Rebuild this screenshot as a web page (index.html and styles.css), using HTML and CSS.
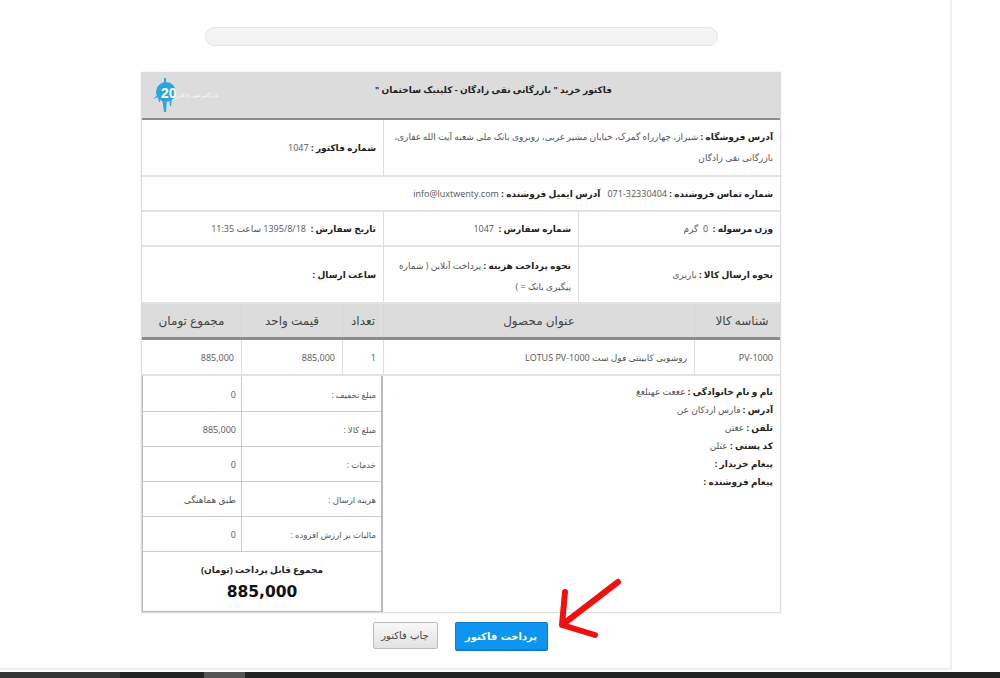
FILE: index.html
```html
<!DOCTYPE html>
<html lang="fa" dir="rtl">
<head>
  <meta charset="UTF-8" />
  <title>فاکتور خرید</title>
  <link rel="stylesheet" href="styles.css">
</head>
<body>
  <div class="page">
    <div class="search-pill"></div>

    <div class="invoice">
      <div class="inv-head">
        <div class="inv-title">فاکتور خرید " بازرگانی نقی زادگان - کلینیک ساختمان "</div>
        <div class="logo" dir="ltr">
          <svg width="30" height="36" viewBox="0 0 30 36">
            <circle cx="15" cy="15" r="10" fill="#2ba6dc"/>
            <path d="M13 1l2 0 0 6-2 0zM2 22l7-6 1 3zM11 20l5 0-1 15-2 0zM18 20l3 0-1 9-1 0zM7 20l2 0 0 5-1 0z" fill="#2ba6dc"/>
            <text x="10" y="21" class="logo-num">20</text>
          </svg>
          <span class="logo-text">بازرگانی نقی زادگان</span>
        </div>
      </div>

      <div class="row row-half row-address">
        <div class="cell cell-top">
          <p><b>آدرس فروشگاه :</b> شیراز، چهارراه گمرک، خیابان مشیر غربی، روبروی بانک ملی شعبه آیت الله غفاری،</p>
          <p>بازرگانی نقی زادگان</p>
        </div>
        <div class="cell"><span><b>شماره فاکتور :</b> 1047</span></div>
      </div>

      <div class="row row-full row-contact">
        <div class="cell"><span><b>شماره تماس فروشنده :</b> <bdi dir="ltr">071-32330404</bdi> &nbsp; <b>آدرس ایمیل فروشنده :</b> info@luxtwenty.com</span></div>
      </div>

      <div class="row row-third row-order">
        <div class="cell"><span><b>وزن مرسوله :</b> &nbsp;0 &nbsp;گرم</span></div>
        <div class="cell"><span><b>شماره سفارش :</b> &nbsp;1047</span></div>
        <div class="cell"><span><b>تاریخ سفارش :</b> &nbsp;1395/8/18 ساعت 11:35</span></div>
      </div>

      <div class="row row-third row-ship">
        <div class="cell"><span><b>نحوه ارسال کالا :</b> باربری</span></div>
        <div class="cell cell-pay"><b>نحوه پرداخت هزینه :</b> پرداخت آنلاین ( شماره پیگیری بانک = )</div>
        <div class="cell"><span><b>ساعت ارسال :</b></span></div>
      </div>

      <div class="row row-items row-th">
        <div class="cell">شناسه کالا</div>
        <div class="cell">عنوان محصول</div>
        <div class="cell">تعداد</div>
        <div class="cell">قیمت واحد</div>
        <div class="cell">مجموع تومان</div>
      </div>

      <div class="row row-items row-product">
        <div class="cell">PV-1000</div>
        <div class="cell">روشویی کابینتی فول ست LOTUS PV-1000</div>
        <div class="cell">1</div>
        <div class="cell">885,000</div>
        <div class="cell">885,000</div>
      </div>

      <div class="bottom">
        <div class="buyer">
          <p><b>نام و نام خانوادگی :</b> عغعت عهنلعغ</p>
          <p><b>آدرس :</b> فارس اردکان عن</p>
          <p><b>تلفن :</b> عغتن</p>
          <p><b>کد پستی :</b> عتلن</p>
          <p><b>پیغام خریدار :</b></p>
          <p><b>پیغام فروشنده :</b></p>
        </div>
        <div class="summary">
          <div class="sum-row"><div class="sum-label">مبلغ تخفیف :</div><div class="sum-val">0</div></div>
          <div class="sum-row"><div class="sum-label">مبلغ کالا :</div><div class="sum-val">885,000</div></div>
          <div class="sum-row"><div class="sum-label">خدمات :</div><div class="sum-val">0</div></div>
          <div class="sum-row"><div class="sum-label">هزینه ارسال :</div><div class="sum-val">طبق هماهنگی</div></div>
          <div class="sum-row"><div class="sum-label">مالیات بر ارزش افزوده :</div><div class="sum-val">0</div></div>
          <div class="sum-total">
            <div class="total-label">مجموع قابل پرداخت (تومان)</div>
            <div class="total-num">885,000</div>
          </div>
        </div>
      </div>
    </div>

    <div class="actions">
      <button class="btn-pay">پرداخت فاکتور</button>
      <button class="btn-print">چاپ فاکتور</button>
    </div>

    <!-- فلش قرمز روی صفحه -->
    <svg class="arrow" width="70" height="64" viewBox="0 0 70 64">
      <path d="M63 5L7 48M10 15L7 48L40 58" fill="none" stroke="#f01010" stroke-width="6" stroke-linecap="round" stroke-linejoin="round"/>
    </svg>
  </div>

  <div class="taskbar" dir="ltr">
    <div class="seg seg-a"></div>
    <div class="seg seg-b"></div>
    <div class="seg seg-c"></div>
    <div class="seg seg-d"></div>
  </div>
</body>
</html>
```

FILE: styles.css
```css
html, body {
  margin: 0;
  height: 678px;
  overflow: hidden;
  background: #fff;
}

body {
  font-family: "Open Sans", "DejaVu Sans", sans-serif;
  font-size: 9px;
  color: #555;
  display: flex;
  flex-direction: column;
}

.page {
  position: relative;
  box-sizing: border-box;
  width: 952px;
  height: 670px;
  margin-right: 48px;
  padding: 27px 169px 0 0;
  border-right: 2px solid #f0f0f0;
  border-bottom: 2px solid #f0f0f0;
}

p {
  margin: 0;
}

b {
  color: #222;
}

.search-pill {
  box-sizing: border-box;
  width: 513px;
  height: 19px;
  margin-right: 63px;
  background: #f4f4f4;
  border: 1px solid #e4e4e4;
  border-radius: 10px;
}

.invoice {
  box-sizing: border-box;
  width: 640px;
  margin-top: 26px;
  border: 1px solid #ddd;
  border-top: 0;
  box-shadow: 0 0 1px #ccc;
}

.inv-head {
  display: flex;
  justify-content: space-between;
  align-items: flex-start;
  height: 46px;
  background: #dcdcdc;
  border-bottom: 2px solid #8c8c8c;
}

.inv-title {
  margin-top: 11px;
  margin-right: 168px;
  font-weight: bold;
  color: #222;
}

.logo {
  display: flex;
  align-items: center;
  margin: 5px 0 0 9px;
}

.logo-num {
  font-family: "Liberation Sans", sans-serif;
  font-size: 14px;
  font-weight: bold;
  fill: #fff;
}

.logo-text {
  margin-left: -4px;
  font-size: 5px;
  color: #fff;
}

.row {
  display: grid;
  border-bottom: 2px solid #e2e2e2;
}

.cell {
  display: flex;
  align-items: center;
  padding: 0 7px;
  border-left: 1px solid #ddd;
}

.cell:last-child {
  border-left: 0;
}

.cell-top {
  display: block;
  padding-top: 6px;
  line-height: 21px;
}

.row-half {
  grid-template-columns: 397px 1fr;
}

.row-full {
  grid-template-columns: 1fr;
}

.row-third {
  grid-template-columns: 202px 195px 1fr;
}

.row-address {
  height: 55px;
}

.row-contact,
.row-order {
  height: 33px;
}

.row-ship {
  height: 55px;
}

.cell-pay {
  display: block;
  padding-top: 8px;
  line-height: 21px;
}

.row-items {
  grid-template-columns: 86px 311px 41px 101px 1fr;
}

.row-th {
  height: 33px;
  background: #dcdcdc;
  border-bottom: 3px solid #8c8c8c;
  font-size: 12px;
  color: #444;
}

.row-th .cell {
  justify-content: center;
  border-left-color: #d4d4d4;
}

.row-th .cell:first-child {
  padding-left: 16px;
}

.row-product {
  height: 34px;
}

.bottom {
  display: grid;
  grid-template-columns: 397px 1fr;
  height: 236px;
}

.buyer {
  padding: 7px 7px 0 0;
  line-height: 18px;
}

.summary {
  display: flex;
  flex-direction: column;
  padding-top: 1px;
  border: 1px solid #bbb;
  border-top: 0;
  border-right-width: 2px;
}

.sum-row {
  display: grid;
  grid-template-columns: 140px 1fr;
  height: 34px;
  border-bottom: 1px solid #ccc;
}

.sum-label,
.sum-val {
  display: flex;
  align-items: center;
  padding: 0 5px;
}

.sum-label {
  font-size: 8.5px;
  border-left: 1px solid #ccc;
}

.sum-total {
  flex: 1;
  text-align: center;
  padding-top: 11px;
}

.total-label {
  font-weight: bold;
  color: #222;
}

.total-num {
  margin-top: 7px;
  font-family: "DejaVu Sans", sans-serif;
  font-size: 15.5px;
  font-weight: bold;
  color: #111;
}

.actions {
  display: flex;
  justify-content: center;
  align-items: flex-start;
  gap: 17px;
  box-sizing: border-box;
  width: 640px;
  margin-top: 9px;
  padding-right: 2px;
}

.actions button {
  font-family: "DejaVu Sans", sans-serif;
  font-size: 10px;
  border-radius: 2px;
  padding: 0;
}

.btn-pay {
  width: 93px;
  height: 29px;
  font-weight: bold;
  font-size: 9.5px;
  color: #fff;
  background: #0d95f0;
  border: 1px solid #0a7fd0;
  border-bottom-width: 2px;
}

.btn-print {
  width: 65px;
  height: 27px;
  color: #444;
  background: linear-gradient(#f8f8f8, #e2e2e2);
  border: 1px solid #bbb;
}

.arrow {
  position: absolute;
  left: 555px;
  top: 577px;
}

.taskbar {
  display: flex;
  height: 6px;
  margin-top: 2px;
  background: #222;
}

.seg-a {
  width: 120px;
  background: #353535;
}

.seg-b {
  width: 84px;
  background: #232323;
}

.seg-c {
  width: 41px;
  background: #555;
}

.seg-d {
  flex: 1;
  background: #232323;
}
```
